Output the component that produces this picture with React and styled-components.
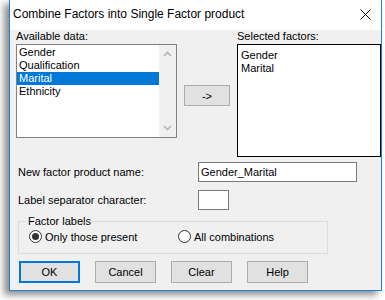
import React from 'react'
import styled, { createGlobalStyle } from 'styled-components'

const GlobalStyle = createGlobalStyle`
  html, body {
    margin: 0;
    padding: 0;
    background: #ffffff;
  }
  body {
    font-family: "Liberation Sans", Arial, sans-serif;
    font-size: 11px;
    color: #000;
  }
`

const availableData = ['Gender', 'Qualification', 'Marital', 'Ethnicity']
const selectedFactors = ['Gender', 'Marital']

function CloseIcon() {
  return (
    <svg width="11" height="11" viewBox="0 0 11 11">
      <path d="M0.5 0.5 L10.5 10.5 M10.5 0.5 L0.5 10.5" stroke="#000" strokeWidth="1" fill="none" />
    </svg>
  )
}

function Chevron({ down }) {
  return (
    <svg width="9" height="6" viewBox="0 0 9 6">
      <path
        d={down ? 'M1 1 L4.5 4.5 L8 1' : 'M1 5 L4.5 1.5 L8 5'}
        stroke="#b4b4b4"
        strokeWidth="1.6"
        fill="none"
      />
    </svg>
  )
}

function Radio({ checked, label }) {
  return (
    <RadioLabel>
      <RadioCircle>{checked && <RadioDot />}</RadioCircle>
      {label}
    </RadioLabel>
  )
}

export default function App() {
  return (
    <>
      <GlobalStyle />
      <Page>
        <Window>
          <TitleBar>
            <Title>Combine Factors into Single Factor product</Title>
            <CloseButton><CloseIcon /></CloseButton>
          </TitleBar>

          <Body>
            <TopRow>
              <LeftColumn>
                <Caption>Available data:</Caption>
                <ListBox>
                  <Items>
                    {availableData.map(item => (
                      <Item key={item} selected={item === 'Marital'}>{item}</Item>
                    ))}
                  </Items>
                  <ScrollBar>
                    <Chevron />
                    <Chevron down />
                  </ScrollBar>
                </ListBox>
              </LeftColumn>

              <ArrowButton>-&gt;</ArrowButton>

              <RightColumn>
                <Caption>Selected factors:</Caption>
                <SelectedBox>
                  {selectedFactors.map(item => (
                    <SelectedItem key={item}>{item}</SelectedItem>
                  ))}
                </SelectedBox>
              </RightColumn>
            </TopRow>

            <FieldRow gap={5}>
              <FieldLabel>New factor product name:</FieldLabel>
              <TextInput width={159}>Gender_Marital</TextInput>
            </FieldRow>

            <FieldRow gap={8}>
              <FieldLabel>Label separator character:</FieldLabel>
              <TextInput width={31} />
            </FieldRow>

            <GroupBox>
              <Legend>Factor labels</Legend>
              <RadioRow>
                <Radio checked label="Only those present" />
                <Radio label="All combinations" />
              </RadioRow>
            </GroupBox>

            <ButtonRow>
              <Button focused>OK</Button>
              <Button>Cancel</Button>
              <Button>Clear</Button>
              <Button>Help</Button>
            </ButtonRow>
          </Body>
        </Window>
      </Page>
    </>
  )
}

const Page = styled.div`
  padding-left: 9px;
  width: 385px;
  height: 300px;
  box-sizing: border-box;
  overflow: hidden;
`

const Window = styled.div`
  width: 373px;
  height: 291px;
  box-sizing: border-box;
  border: 1px solid #1883d7;
  border-top: none;
  background: #f0f0f0;
  box-shadow: -5px 4px 7px rgba(0, 0, 0, 0.45);
  display: flex;
  flex-direction: column;
`

const TitleBar = styled.div`
  height: 30px;
  box-sizing: border-box;
  background: #ffffff;
  display: flex;
  align-items: center;
  justify-content: space-between;
  padding: 0 10px 2px 3px;
  flex-shrink: 0;
`

const Title = styled.span`
  font-size: 12px;
  color: #000;
`

const CloseButton = styled.span`
  display: flex;
  align-items: center;
`

const Body = styled.div`
  display: flex;
  flex-direction: column;
  padding: 0 0 0 6px;
`

const TopRow = styled.div`
  display: flex;
  align-items: flex-start;
`

const LeftColumn = styled.div`
  display: flex;
  flex-direction: column;
  width: 161px;
`

const RightColumn = styled.div`
  display: flex;
  flex-direction: column;
  width: 144px;
  margin-left: 7px;
`

const Caption = styled.div`
  height: 14px;
  line-height: 13px;
`

const ListBox = styled.div`
  height: 94px;
  box-sizing: border-box;
  border: 1px solid #828282;
  background: #fff;
  display: flex;
`

const Items = styled.div`
  flex: 1;
  display: flex;
  flex-direction: column;
  padding-top: 1px;
`

const Item = styled.div`
  height: 13px;
  line-height: 13px;
  padding-left: 2px;
  background: ${p => (p.selected ? '#0078d7' : 'transparent')};
  color: ${p => (p.selected ? '#fff' : '#000')};
`

const ScrollBar = styled.div`
  width: 17px;
  background: #f0f0f0;
  display: flex;
  flex-direction: column;
  align-items: center;
  justify-content: space-between;
  padding: 6px 0 6px;
`

const ArrowButton = styled.div`
  width: 46px;
  height: 21px;
  box-sizing: border-box;
  margin: 55px 0 0 7px;
  background: #e1e1e1;
  border: 1px solid #adadad;
  display: flex;
  align-items: center;
  justify-content: center;
  font-size: 11px;
`

const SelectedBox = styled.div`
  height: 113px;
  box-sizing: border-box;
  border: 1px solid #000;
  background: #fff;
  padding: 4px 0 0 3px;
  display: flex;
  flex-direction: column;
`

const SelectedItem = styled.div`
  height: 13px;
  line-height: 13px;
`

const FieldRow = styled.div`
  display: flex;
  align-items: center;
  margin-top: ${p => p.gap}px;
  padding-left: 2px;
`

const FieldLabel = styled.div`
  width: 180px;
`

const TextInput = styled.div`
  width: ${p => p.width}px;
  height: 20px;
  box-sizing: border-box;
  border: 1px solid #7a7a7a;
  background: #fff;
  padding-left: 2px;
  line-height: 18px;
`

const GroupBox = styled.fieldset`
  margin: 5px 0 0 2px;
  width: 295px;
  height: 39px;
  box-sizing: border-box;
  border: 1px solid #dcdcdc;
  padding: 0 0 0 10px;
`

const Legend = styled.legend`
  padding: 0 1px;
  margin-left: -2px;
  font-size: 11px;
  line-height: 12px;
`

const RadioRow = styled.div`
  display: flex;
  align-items: center;
  margin-top: 3px;
`

const RadioLabel = styled.div`
  display: flex;
  align-items: center;
  gap: 3px;
  width: 149px;
`

const RadioCircle = styled.span`
  width: 13px;
  height: 13px;
  box-sizing: border-box;
  border: 1px solid #333;
  border-radius: 50%;
  background: #fff;
  display: flex;
  align-items: center;
  justify-content: center;
`

const RadioDot = styled.span`
  width: 7px;
  height: 7px;
  border-radius: 50%;
  background: #333;
`

const ButtonRow = styled.div`
  display: flex;
  gap: 15px;
  margin: 7px 0 0 3px;
`

const Button = styled.div`
  width: 61px;
  height: 22px;
  box-sizing: border-box;
  background: #e1e1e1;
  border: ${p => (p.focused ? '2px solid #0078d7' : '1px solid #adadad')};
  display: flex;
  align-items: center;
  justify-content: center;
`
